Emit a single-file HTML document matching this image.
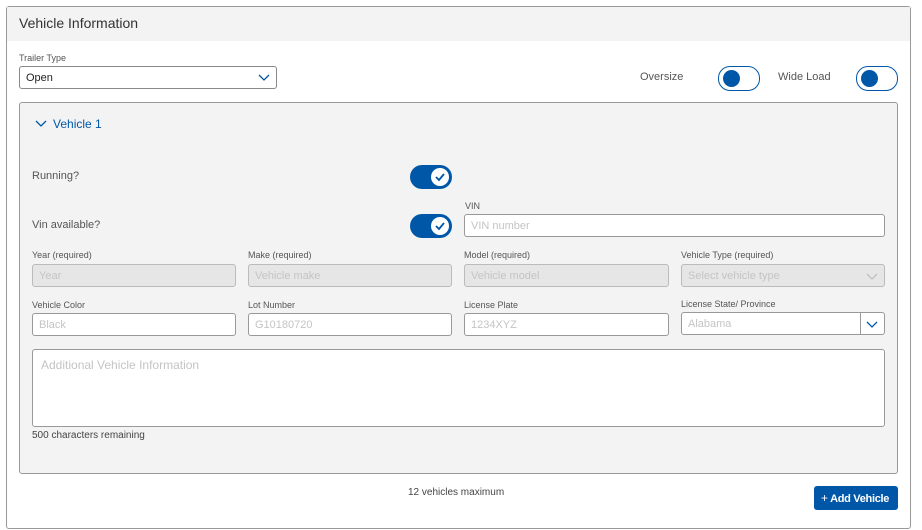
<!DOCTYPE html>
<html><head><style>
*{box-sizing:border-box;margin:0;padding:0}
body{width:922px;height:530px;background:#fff;font-family:"Liberation Sans",sans-serif;position:relative;overflow:hidden}
.a{position:absolute}
.lbl{position:absolute;font-size:9px;color:#555}
.in{position:absolute;height:23px;border:1px solid #999;border-radius:3px;background:#fff;font-size:11px;color:#c4c4c4;padding:5px 6px;white-space:nowrap}
.dis{background:#e6e6e6;border-color:#bbb}
.tog{position:absolute;width:42px;height:24px;border-radius:12px;background:#0057a8}
.tog .k{position:absolute;right:3px;top:3px;width:18px;height:18px;border-radius:50%;background:#fff}
.off{background:#fff;border:1.5px solid #0057a8;height:25px}
.off .k{left:4px;top:3px;width:17px;height:17px;background:#0057a8}
</style></head><body>
<div class="a" style="left:6px;top:6px;width:905px;height:523px;border:1px solid #999;border-radius:3px"></div>
<div class="a" style="left:7px;top:7px;width:903px;height:34px;background:#f3f3f3"></div>
<div class="a" style="left:19px;top:15px;font-size:14px;color:#333">Vehicle Information</div>
<div class="lbl" style="left:19px;top:53px">Trailer Type</div>
<div class="in" style="left:19px;top:66px;width:258px;color:#222;border-color:#888">Open
<svg class="a" style="right:6px;top:7px" width="12" height="8"><path d="M1 1l5 5 5-5" fill="none" stroke="#0057a8" stroke-width="1.3"/></svg></div>
<div class="a" style="left:640px;top:71px;font-size:11px;color:#555">Oversize</div>
<div class="tog off" style="left:718px;top:66px"><div class="k"></div></div>
<div class="a" style="left:778px;top:71px;font-size:11px;color:#555">Wide Load</div>
<div class="tog off" style="left:856px;top:66px"><div class="k"></div></div>

<div class="a" style="left:19px;top:102px;width:879px;height:372px;background:#f3f3f3;border:1px solid #999;border-radius:3px"></div>
<svg class="a" style="left:35px;top:120px" width="12" height="8"><path d="M1 1l5 5 5-5" fill="none" stroke="#0057a8" stroke-width="1.3"/></svg>
<div class="a" style="left:53px;top:117px;font-size:12px;color:#0057a8">Vehicle 1</div>
<div class="a" style="left:32px;top:170px;font-size:11px;color:#555">Running?</div>
<div class="tog" style="left:410px;top:165px"><div class="k"><svg width="18" height="18"><path d="M5 9l3 3 5-6" fill="none" stroke="#0057a8" stroke-width="1.8"/></svg></div></div>
<div class="a" style="left:32px;top:219px;font-size:11px;color:#555">Vin available?</div>
<div class="tog" style="left:410px;top:214px"><div class="k"><svg width="18" height="18"><path d="M5 9l3 3 5-6" fill="none" stroke="#0057a8" stroke-width="1.8"/></svg></div></div>
<div class="lbl" style="left:465px;top:201px">VIN</div>
<div class="in" style="left:464px;top:214px;width:421px">VIN number</div>

<div class="lbl" style="left:32px;top:250px">Year (required)</div>
<div class="in dis" style="left:32px;top:264px;width:204px">Year</div>
<div class="lbl" style="left:248px;top:250px">Make (required)</div>
<div class="in dis" style="left:248px;top:264px;width:204px">Vehicle make</div>
<div class="lbl" style="left:464px;top:250px">Model (required)</div>
<div class="in dis" style="left:464px;top:264px;width:205px">Vehicle model</div>
<div class="lbl" style="left:681px;top:250px">Vehicle Type (required)</div>
<div class="in dis" style="left:681px;top:264px;width:204px">Select vehicle type
<svg class="a" style="right:6px;top:8px" width="12" height="8"><path d="M1 1l5 5 5-5" fill="none" stroke="#bbb" stroke-width="1.2"/></svg></div>

<div class="lbl" style="left:32px;top:300px">Vehicle Color</div>
<div class="in" style="left:32px;top:313px;width:204px">Black</div>
<div class="lbl" style="left:248px;top:300px">Lot Number</div>
<div class="in" style="left:248px;top:313px;width:204px">G10180720</div>
<div class="lbl" style="left:464px;top:300px">License Plate</div>
<div class="in" style="left:464px;top:313px;width:205px">1234XYZ</div>
<div class="lbl" style="left:681px;top:299px">License State/ Province</div>
<div class="in" style="left:681px;top:312px;width:204px">Alabama
<div class="a" style="left:178px;top:0;width:1px;height:21px;background:#999"></div>
<svg class="a" style="right:6px;top:8px" width="12" height="8"><path d="M1 1l5 5 5-5" fill="none" stroke="#0057a8" stroke-width="1.3"/></svg></div>

<div class="in" style="left:32px;top:349px;width:853px;height:78px;font-size:12px;padding:8px 8px">Additional Vehicle Information</div>
<div class="a" style="left:32px;top:430px;font-size:10px;color:#444">500 characters remaining</div>

<div class="a" style="left:408px;top:487px;font-size:10px;color:#444">12 vehicles maximum</div>
<div class="a" style="left:814px;top:486px;width:84px;height:24px;background:#0057a8;border-radius:3px;color:#fff;font-size:11px;font-weight:bold;padding:5px 0 0 7px;letter-spacing:-0.3px"><span style="font-weight:normal;font-size:12px">+</span> Add Vehicle</div>
</body></html>
